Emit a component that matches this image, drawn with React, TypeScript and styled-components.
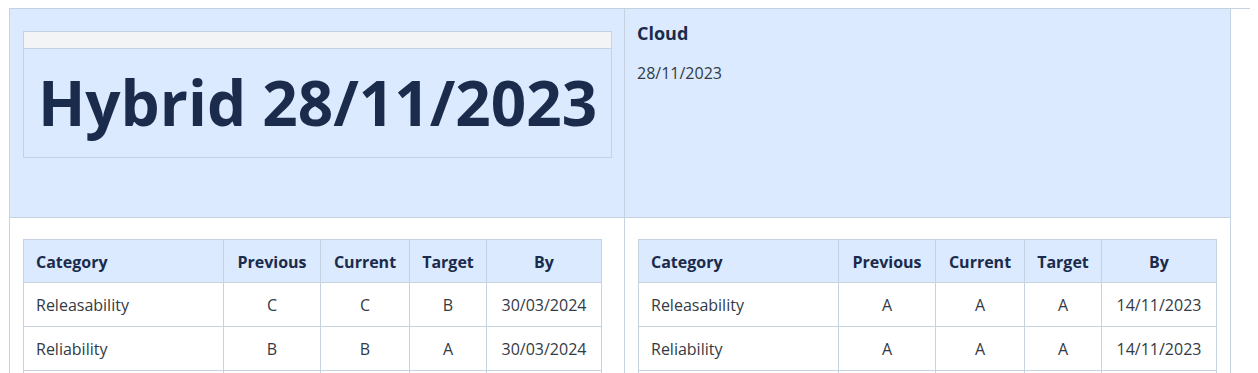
import styled, { createGlobalStyle } from 'styled-components';

const GlobalStyle = createGlobalStyle`
  body {
    margin: 8px;
    font-family: 'Open Sans', 'Liberation Sans', sans-serif;
    color: #333a45;
    background: #fff;
  }
  * {
    box-sizing: border-box;
  }
`;

const Board = styled.div`
  display: grid;
  grid-template-columns: 615px 606px;
  border-top: 1px solid #c7d2e0;
  border-left: 1px solid #c7d2e0;
  margin-left: 1px;
`;

interface ICell {
  tint?: boolean;
}

const Cell = styled.div`
  border-right: 1px solid #c7d2e0;
  border-bottom: 1px solid #c7d2e0;
  background: ${(props: ICell) => (props.tint ? '#dbeafe' : '#fff')};
  padding: 12px 13px 0;
  min-height: 209px;
`;

const TableCell = styled(Cell)`
  padding: 21px 13px 0;
  min-height: 0;
`;

const TitleCard = styled.div`
  margin-top: 10px;
  width: 589px;
  border: 1px solid #c7d2e0;
`;

const TitleStrip = styled.div`
  height: 17px;
  background: #f3f4f6;
  border-bottom: 1px solid #c7d2e0;
`;

const BigTitle = styled.h1`
  margin: 0;
  padding: 16px 0 17px;
  text-align: center;
  font-size: 62px;
  line-height: 75px;
  font-weight: 700;
  color: #1a2b4c;
`;

const SiteName = styled.h3`
  margin: 0 0 17px -1px;
  font-size: 18px;
  font-weight: 700;
  color: #1a2b4c;
`;

const SiteDate = styled.div`
  margin-left: -1px;
  font-size: 16px;
`;

const Grid = styled.table`
  border-collapse: collapse;
  table-layout: fixed;
  width: 578px;
  font-size: 16px;
`;

interface IAlign {
  left?: boolean;
}

const Th = styled.th`
  background: #dbeafe;
  color: #1a2b4c;
  font-weight: 700;
  height: 43px;
  padding: 1px 12px 0;
  border: 1px solid #c7d2e0;
  text-align: ${(props: IAlign) => (props.left ? 'left' : 'center')};
`;

const Td = styled.td`
  height: 44px;
  padding: 1px 12px 0;
  border: 1px solid #c7d2e0;
  text-align: ${(props: IAlign) => (props.left ? 'left' : 'center')};
`;

interface Row {
  category: string;
  previous: string;
  current: string;
  target: string;
  by: string;
}

const blank: Row = { category: '', previous: '', current: '', target: '', by: '' };

const hybridRows: Row[] = [
  { category: 'Releasability', previous: 'C', current: 'C', target: 'B', by: '30/03/2024' },
  { category: 'Reliability', previous: 'B', current: 'B', target: 'A', by: '30/03/2024' },
  blank,
];

const cloudRows: Row[] = [
  { category: 'Releasability', previous: 'A', current: 'A', target: 'A', by: '14/11/2023' },
  { category: 'Reliability', previous: 'A', current: 'A', target: 'A', by: '14/11/2023' },
  blank,
];

const RatingTable = ({ rows }: { rows: Row[] }) => (
  <Grid>
    <colgroup>
      <col style={{ width: 200 }} />
      <col style={{ width: 97 }} />
      <col style={{ width: 89 }} />
      <col style={{ width: 77 }} />
      <col style={{ width: 115 }} />
    </colgroup>
    <thead>
      <tr>
        <Th left>Category</Th>
        <Th>Previous</Th>
        <Th>Current</Th>
        <Th>Target</Th>
        <Th>By</Th>
      </tr>
    </thead>
    <tbody>
      {rows.map((r, i) => (
        <tr key={i}>
          <Td left>{r.category}</Td>
          <Td>{r.previous}</Td>
          <Td>{r.current}</Td>
          <Td>{r.target}</Td>
          <Td>{r.by}</Td>
        </tr>
      ))}
    </tbody>
  </Grid>
);

const App = () => (
  <>
    <GlobalStyle />
    <Board>
      <Cell tint>
        <TitleCard>
          <TitleStrip />
          <BigTitle>Hybrid 28/11/2023</BigTitle>
        </TitleCard>
      </Cell>
      <Cell tint>
        <SiteName>Cloud</SiteName>
        <SiteDate>28/11/2023</SiteDate>
      </Cell>
      <TableCell>
        <RatingTable rows={hybridRows} />
      </TableCell>
      <TableCell>
        <RatingTable rows={cloudRows} />
      </TableCell>
    </Board>
  </>
);

export default App;
